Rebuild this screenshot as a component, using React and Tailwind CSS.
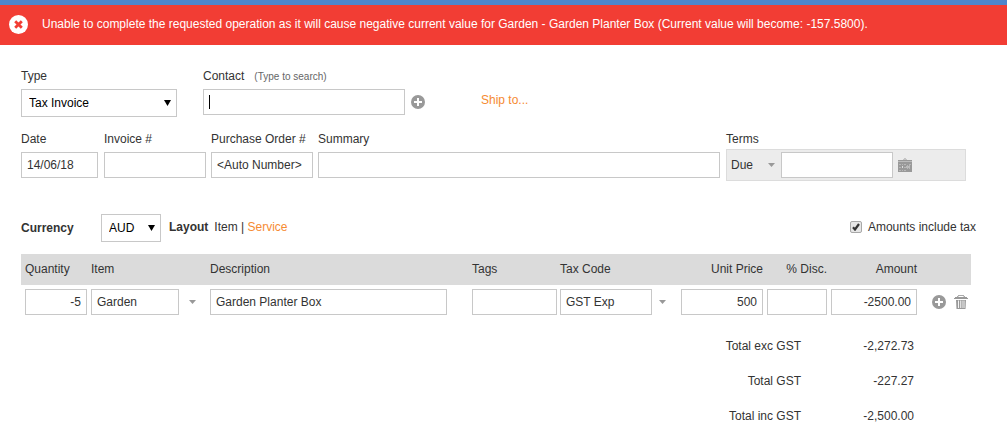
import React from "react";

const field =
  "block h-[26px] min-w-0 border border-[#c8c8c8] bg-white px-[5px] text-[12px] text-[#333] outline-none";

function PlusIcon() {
  return (
    <svg className="block size-[14px]" viewBox="0 0 14 14" aria-hidden="true">
      <circle cx="7" cy="7" r="7" fill="#999" />
      <path d="M3 6h3V3h2v3h3v2H8v3H6V8H3z" fill="#fff" />
    </svg>
  );
}

function TrashIcon() {
  return (
    <svg className="block size-[14px]" viewBox="0 0 14 14" aria-hidden="true">
      <path d="M4 0h6v1h1v1h-1.500V1h-5v1H3V1h1z" fill="#aaa" />
      <path d="M1 2h12v1h1v1H0V3h1z" fill="#999" />
      <path d="M2 5h10l-.5 9h-9z" fill="#999" />
      <path d="M4 5.500h1V13H4zM6 5.500h.8V13H6zM7.700 5.500h.8V13h-.8zM9.500 5.500h1V13h-1z" fill="#f4f4f4" />
    </svg>
  );
}

function CalendarIcon() {
  return (
    <svg className="block size-[14px]" viewBox="0 0 14 14" aria-hidden="true">
      <path d="M5 2V1h1V0h2v1h1v1z" fill="#c4c4c4" />
      <path d="M0 2h14v1H0z" fill="#999" />
      <path d="M0 3h14v1H0z" fill="#bcbcbc" />
      <path d="M0 4h14v10H0z" fill="#999" />
      <path
        d="M1 6h2v1H1zM4 6h1v1H4zM6 6h2v1H6zM11 6h2v1h-2zM1 9h2v1H1zM6 9h2v1H6zM1 12h2v1H1zM4 12h1v1H4zM6 12h2v1H6zM9 7h1v1H9zM11 7h1v1h-1zM9 10h1v1H9zM11 10h1v1h-1z"
        fill="#b8b8b8"
      />
      <path d="M4 8h1v2H4zM8 8.500h4v1H8z" fill="#dedede" />
    </svg>
  );
}

function SmallArrow() {
  return (
    <svg className="block h-[4px] w-[7px]" viewBox="0 0 7 4" aria-hidden="true">
      <path d="M0 0h7L3.500 4z" fill="#999" />
    </svg>
  );
}

function SelectBox({ id, value, options, className }) {
  return (
    <div className={className}>
      <select
        id={id}
        defaultValue={value}
        className="col-start-1 row-start-1 h-[28px] w-full appearance-none border border-[#c8c8c8] bg-white pl-[7px] text-[12px] text-black outline-none"
      >
        {options.map((o) => (
          <option key={o}>{o}</option>
        ))}
      </select>
      <svg
        className="pointer-events-none col-start-1 row-start-1 mr-[6px] h-[6px] w-[7px] self-center justify-self-end"
        viewBox="0 0 7 6"
        aria-hidden="true"
      >
        <path d="M0 0h7L3.500 6z" fill="#000" />
      </svg>
    </div>
  );
}

function Field({ id, label, className, inputClass, value }) {
  return (
    <div className={className}>
      <label htmlFor={id} className="block h-[20px] whitespace-nowrap">
        {label}
      </label>
      <input id={id} type="text" defaultValue={value} className={inputClass} />
    </div>
  );
}

function Combo({ label, value, inputClass, buttonClass }) {
  return (
    <div className="flex items-center">
      <input type="text" aria-label={label} defaultValue={value} className={inputClass} />
      <button type="button" aria-label={"Choose " + label.toLowerCase()} className={buttonClass}>
        <SmallArrow />
      </button>
    </div>
  );
}

const totals = [
  ["Total exc GST", "-2,272.73"],
  ["Total GST", "-227.27"],
  ["Total inc GST", "-2,500.00"],
];

export default function App() {
  return (
    <div className="bg-white font-['Liberation_Sans',Arial,sans-serif] text-[12px] leading-[14px] text-[#333]">
      <div className="h-[5px] bg-[#4f86cc]" />
      <div role="alert" className="flex min-h-[40px] items-center gap-[14px] bg-[#f23d34] pb-[2px] pl-[9px] text-white">
        <svg className="size-[19px] shrink-0" viewBox="0 0 19 19" aria-hidden="true">
          <circle cx="9.500" cy="9.500" r="9.500" fill="#fff" />
          <path d="M6.200 6.200l6.600 6.600M12.800 6.200l-6.600 6.600" stroke="#f23d34" strokeWidth="2.800" />
        </svg>
        <p>
          Unable to complete the requested operation as it will cause negative current value for Garden - Garden
          Planter Box (Current value will become: -157.5800).
        </p>
      </div>

      <form className="pl-[21px]" onSubmit={(e) => e.preventDefault()}>
        <div className="flex items-start pt-6">
          <div className="w-[156px]">
            <label htmlFor="type" className="block h-[20px]">
              Type
            </label>
            <SelectBox id="type" value="Tax Invoice" options={["Tax Invoice", "Quote", "Order"]} className="grid" />
          </div>
          <div className="ml-[26px]">
            <label htmlFor="contact" className="flex h-[20px] gap-[10px]">
              <span>Contact</span>
              <span className="text-[10px] leading-[16px] text-[#666]">(Type to search)</span>
            </label>
            <div className="flex items-center gap-[6px]">
              <div className="relative">
                <input id="contact" type="text" className={`${field} w-[202px]`} />
                <span className="absolute top-[6px] left-[6px] h-[14px] w-px bg-black" />
              </div>
              <button type="button" aria-label="Add contact">
                <PlusIcon />
              </button>
            </div>
          </div>
          <a href="#ship" className="mt-6 ml-14 text-[#f68b33]">
            Ship to...
          </a>
        </div>

        <div className="flex items-start gap-[5px] pt-[15px] pr-[41px]">
          <Field id="date" label="Date" value="14/06/18" className="mr-px" inputClass={`${field} w-[77px]`} />
          <Field id="invoice" label="Invoice #" inputClass={`${field} w-[102px]`} />
          <Field id="po" label="Purchase Order #" value="<Auto Number>" inputClass={`${field} w-[102px]`} />
          <Field id="summary" label="Summary" className="mr-px min-w-0 flex-1" inputClass={`${field} w-full`} />
          <div className="w-[240px] shrink-0">
            <label htmlFor="due" className="block h-[17px]">
              Terms
            </label>
            <div className="flex h-[32px] items-center border border-[#dcdcdc] bg-[#ececec] pl-1">
              <div className="grid w-[50px] items-center">
                <select
                  id="due"
                  className="col-start-1 row-start-1 w-full appearance-none bg-transparent text-[12px] outline-none"
                >
                  <option>Due</option>
                  <option>Net</option>
                </select>
                <span className="pointer-events-none col-start-1 row-start-1 mr-[6px] justify-self-end">
                  <SmallArrow />
                </span>
              </div>
              <input type="text" aria-label="Due date" className={`${field} w-[112px]`} />
              <button type="button" aria-label="Open calendar" className="ml-[5px]">
                <CalendarIcon />
              </button>
            </div>
          </div>
        </div>

        <div className="flex items-center pt-[33px] pr-[31px]">
          <label htmlFor="currency" className="w-[80px] font-bold">
            Currency
          </label>
          <SelectBox id="currency" value="AUD" options={["AUD", "NZD", "USD"]} className="grid w-[60px]" />
          <div className="ml-2 flex gap-[6px] pb-[2px]">
            <b>Layout</b>
            <p>
              Item |{" "}
              <a href="#service" className="text-[#f68b33]">
                Service
              </a>
            </p>
          </div>
          <label className="ml-auto flex items-center gap-[6px] pb-[2px]">
            <span className="grid place-items-center">
              <input
                type="checkbox"
                defaultChecked
                className="col-start-1 row-start-1 size-[12px] appearance-none rounded-[2px] border border-[#a8a8a8] bg-[#e6e6e6]"
              />
              <svg
                className="pointer-events-none col-start-1 row-start-1 size-[8px]"
                viewBox="0 0 8 8"
                aria-hidden="true"
              >
                <path d="M1 4.200L3 6.500L7 1" fill="none" stroke="#333" strokeWidth="2.200" />
              </svg>
            </span>
            Amounts include tax
          </label>
        </div>

        <div className="pt-3 pr-9">
          <table className="w-full table-fixed border-collapse">
            <colgroup>
              <col className="w-[70px]" />
              <col className="w-[119px]" />
              <col />
              <col className="w-[88px]" />
              <col className="w-[121px]" />
              <col className="w-[86px]" />
              <col className="w-[64px]" />
              <col className="w-[90px]" />
              <col className="w-[50px]" />
            </colgroup>
            <thead>
              <tr className="h-[31px] bg-[#dbdbdb] text-left *:p-0 *:pb-[2px] *:font-normal">
                <th scope="col">
                  <span className="ml-1">Quantity</span>
                </th>
                <th scope="col">Item</th>
                <th scope="col">Description</th>
                <th scope="col">Tags</th>
                <th scope="col">Tax Code</th>
                <th scope="col" className="text-right">
                  <span className="mr-1">Unit Price</span>
                </th>
                <th scope="col" className="text-right">
                  <span className="mr-1">% Disc.</span>
                </th>
                <th scope="col" className="text-right">
                  <span className="mr-1">Amount</span>
                </th>
                <td />
              </tr>
            </thead>
            <tbody>
              <tr>
                <td className="px-1 pt-1 pb-[13px]">
                  <input aria-label="Quantity" defaultValue="-5" className={`${field} w-full text-right`} />
                </td>
                <td className="pt-1 pb-[13px]">
                  <Combo label="Item" value="Garden" inputClass={`${field} w-[88px]`} buttonClass="ml-[10px]" />
                </td>
                <td className="pt-1 pr-[25px] pb-[13px]">
                  <input aria-label="Description" defaultValue="Garden Planter Box" className={`${field} w-full`} />
                </td>
                <td className="pt-1 pr-[3px] pb-[13px]">
                  <input aria-label="Tags" className={`${field} w-full`} />
                </td>
                <td className="pt-1 pb-[13px]">
                  <Combo label="Tax code" value="GST Exp" inputClass={`${field} w-[92px]`} buttonClass="ml-[7px]" />
                </td>
                <td className="pt-1 pr-1 pb-[13px]">
                  <input aria-label="Unit price" defaultValue="500" className={`${field} w-full text-right`} />
                </td>
                <td className="pt-1 pr-1 pb-[13px]">
                  <input aria-label="Discount percent" className={`${field} w-full text-right`} />
                </td>
                <td className="pt-1 pr-1 pb-[13px]">
                  <input aria-label="Amount" defaultValue="-2500.00" className={`${field} w-full text-right`} />
                </td>
                <td className="pt-1 pb-[13px]">
                  <div className="ml-[11px] flex gap-2">
                    <button type="button" aria-label="Add line">
                      <PlusIcon />
                    </button>
                    <button type="button" aria-label="Delete line">
                      <TrashIcon />
                    </button>
                  </div>
                </td>
              </tr>
            </tbody>
            <tfoot>
              {totals.map(([name, amount]) => (
                <tr key={name} className="h-[35px] text-right">
                  <th scope="row" colSpan={7} className="pr-[30px] font-normal">
                    {name}
                  </th>
                  <td className="pr-[7px]">{amount}</td>
                  <td />
                </tr>
              ))}
            </tfoot>
          </table>
        </div>
      </form>
    </div>
  );
}
